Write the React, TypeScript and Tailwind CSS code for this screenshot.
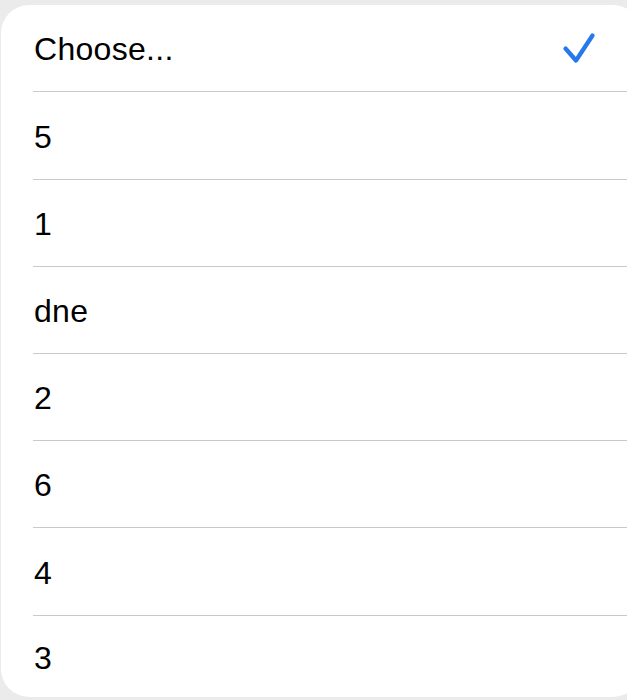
import React from "react";

const options = ["Choose...", "5", "1", "dne", "2", "6", "4", "3"];
// row heights incl. bottom hairline, read off the screenshot
const heights = ["h-[87px]", "h-[88px]", "h-[87px]", "h-[87px]", "h-[87px]", "h-[87px]", "h-[88px]", "h-[82px]"];

const Check = () => (
  <svg width="34" height="32" viewBox="0 0 34 32" fill="none">
    <path
      d="M3.5 16.5 L14 28.5 L30.5 3.5"
      stroke="#2579ea"
      strokeWidth="4.3"
      strokeLinecap="round"
      strokeLinejoin="round"
    />
  </svg>
);

export default function App() {
  const selected = 0;

  return (
    <div className="w-[627px] h-[700px] bg-[#ebebeb] pt-[5px] overflow-hidden">
      <div
        className="ml-[1px] w-[640px] h-[692px] bg-white rounded-[28px] overflow-hidden"
        style={{ fontFamily: '"Liberation Sans", Arial, sans-serif' }}
      >
        {options.map((opt, i) => {
          const last = i === options.length - 1;
          return (
            <div key={opt} className="pl-[32px]">
              <div
                className={`flex items-center justify-between pr-[45px] ${heights[i]} ${
                  last ? "" : "border-b border-[#c9c9c9]"
                }`}
              >
                <span className="pl-[1px] pt-[2px] text-[32px] leading-none text-black tracking-[0.3px]">
                  {opt}
                </span>
                {i === selected && <Check />}
              </div>
            </div>
          );
        })}
      </div>
    </div>
  );
}
